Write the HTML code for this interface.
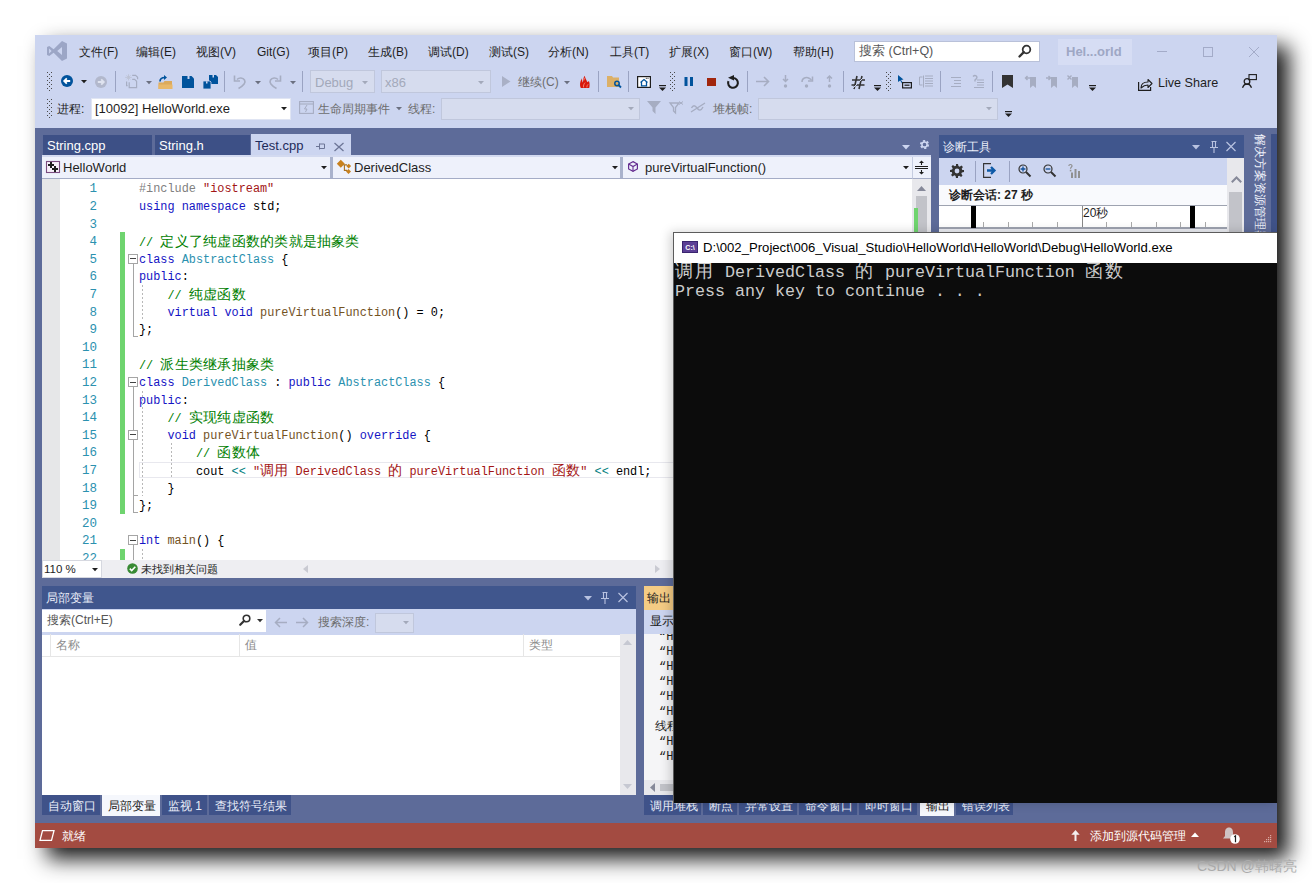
<!DOCTYPE html>
<html><head><meta charset="utf-8">
<style>
*{margin:0;padding:0;box-sizing:border-box}
html,body{width:1312px;height:883px;background:#fff;overflow:hidden;font-family:"Liberation Sans",sans-serif;font-size:12px;color:#1e1e1e}
body{position:relative}
.a{position:absolute;white-space:nowrap}
svg{position:absolute;overflow:visible}
#win{position:absolute;left:35px;top:35px;width:1242px;height:813px;background:#5d6b99;box-shadow:12px 11px 20px 0 rgba(0,0,0,.9)}
.top{position:absolute;left:35px;top:35px;width:1242px;height:93px;background:#ccd5f0}
.mi{position:absolute;top:44px;font-size:12px;color:#1e1e1e;white-space:nowrap;line-height:16px}
.sep{position:absolute;width:1px;background:#9aa3c2}
.combo{position:absolute;border:1px solid #c0c7dc;background:#d6dcee}
.tab{position:absolute;height:20px;background:#3d5086;color:#fff;font-size:13px;line-height:21px;padding-left:4px;white-space:nowrap}
.ln{position:absolute;left:60px;width:37px;text-align:right;font-family:"Liberation Mono",monospace;font-size:12.5px;line-height:17.6px;color:#2b91af}
.code{position:absolute;left:139px;font-family:"Liberation Mono",monospace;font-size:11.87px;line-height:17.6px;color:#000;white-space:pre}
.code i{font-style:normal}
.cj{display:inline-block;font-weight:normal;font-size:13.5px;letter-spacing:0.24px;white-space:nowrap}
.con{left:675px;font-family:"Liberation Mono",monospace;font-size:16.67px;line-height:19px;color:#cccccc;white-space:pre}
.cc{display:inline-block;font-weight:normal;font-size:18px;letter-spacing:2px;white-space:nowrap}
</style></head><body>
<div id="win"></div>
<div class="top"></div>
<!-- MENU BAR -->
<svg style="left:47px;top:41px" width="20" height="20" viewBox="0 0 20 20"><path fill="#9ca6c6" fill-rule="evenodd" d="M20 2.6L15 0 6.6 8.3 2.3 4.9 0 6v8l2.3 1.1 4.3-3.4L15 20l5-2.6zM2.1 7.6L4.6 10 2.1 12.4zM15 6L10.2 10 15 14z"/></svg>
<span class="mi" style="left:79px">文件(F)</span>
<span class="mi" style="left:136px">编辑(E)</span>
<span class="mi" style="left:196px">视图(V)</span>
<span class="mi" style="left:257px">Git(G)</span>
<span class="mi" style="left:308px">项目(P)</span>
<span class="mi" style="left:368px">生成(B)</span>
<span class="mi" style="left:428px">调试(D)</span>
<span class="mi" style="left:489px">测试(S)</span>
<span class="mi" style="left:548px">分析(N)</span>
<span class="mi" style="left:610px">工具(T)</span>
<span class="mi" style="left:669px">扩展(X)</span>
<span class="mi" style="left:729px">窗口(W)</span>
<span class="mi" style="left:793px">帮助(H)</span>
<div class="a" style="left:854px;top:41px;width:186px;height:21px;background:#fff;border:1px solid #b9c1d9"></div>
<span class="a" style="left:859px;top:43px;font-size:12.5px;color:#555;line-height:16px">搜索 (Ctrl+Q)</span>
<svg style="left:1018px;top:44px" width="14" height="14" viewBox="0 0 14 14"><circle cx="8.5" cy="5.5" r="3.8" fill="none" stroke="#333" stroke-width="1.8"/><path d="M5.8 8.2L1.5 12.5" stroke="#333" stroke-width="2.4" stroke-linecap="round"/></svg>
<div class="a" style="left:1058px;top:39px;width:74px;height:26px;background:#d6ddf4"></div>
<span class="a" style="left:1066px;top:44px;font-size:13px;font-weight:bold;color:#9ea7c4;line-height:16px">Hel...orld</span>
<div class="a" style="left:1157px;top:51px;width:10px;height:1px;background:#a3abc8"></div>
<div class="a" style="left:1203px;top:47px;width:10px;height:10px;border:1px solid #a3abc8"></div>
<svg style="left:1249px;top:47px" width="10" height="10" viewBox="0 0 10 10"><path d="M0 0L10 10M10 0L0 10" stroke="#a3abc8" stroke-width="1"/></svg>
<!-- TOOLBAR ROW 1 -->
<svg style="left:47px;top:72px" width="6" height="20" viewBox="0 0 6 20"><rect x="0" y="0" width="1" height="1" fill="#4a4a4a"/><rect x="4" y="0" width="1" height="1" fill="#4a4a4a"/><rect x="2" y="2" width="1" height="1" fill="#4a4a4a"/><rect x="0" y="4" width="1" height="1" fill="#4a4a4a"/><rect x="4" y="4" width="1" height="1" fill="#4a4a4a"/><rect x="2" y="6" width="1" height="1" fill="#4a4a4a"/><rect x="0" y="8" width="1" height="1" fill="#4a4a4a"/><rect x="4" y="8" width="1" height="1" fill="#4a4a4a"/><rect x="2" y="10" width="1" height="1" fill="#4a4a4a"/><rect x="0" y="12" width="1" height="1" fill="#4a4a4a"/><rect x="4" y="12" width="1" height="1" fill="#4a4a4a"/><rect x="2" y="14" width="1" height="1" fill="#4a4a4a"/><rect x="0" y="16" width="1" height="1" fill="#4a4a4a"/><rect x="4" y="16" width="1" height="1" fill="#4a4a4a"/><rect x="2" y="18" width="1" height="1" fill="#4a4a4a"/></svg>
<svg style="left:61px;top:75px" width="12" height="12" viewBox="0 0 12 12"><circle cx="6" cy="6" r="6" fill="#00539c"/><path d="M9.2 6H3.4M5.8 3.4L3.2 6 5.8 8.6" stroke="#fff" stroke-width="1.8" fill="none"/></svg>
<svg style="left:81px;top:80px" width="6" height="4" viewBox="0 0 6 4"><path d="M0 0H6L3 3.2z" fill="#1e1e1e"/></svg>
<svg style="left:95px;top:75.5px" width="12" height="12" viewBox="0 0 12 12"><circle cx="6" cy="6" r="6" fill="#b2b8cc"/><path d="M2.8 6H8.6M6.2 3.4L8.8 6 6.2 8.6" stroke="#dfe3ef" stroke-width="1.8" fill="none"/></svg>
<div class="sep" style="left:115px;top:71px;height:21px"></div>
<svg style="left:122px;top:72px" width="20" height="20" viewBox="0 0 20 20"><path d="M6.5 2.3v6.1M3.2 5.4h6.5M4.5 3.4l4 4M8.5 3.4l-4 4" stroke="#bcc2d4" stroke-width="0.9"/><path d="M10.2 3.4h3.4l2 1.8v2" stroke="#a6adc2" stroke-width="1.2" fill="none"/><path d="M10.2 7.4h2.4l2 1.8v6.4H7.2V10.2" stroke="#a6adc2" stroke-width="1.2" fill="none"/><path d="M4.6 9.4v4.3h1" stroke="#a6adc2" stroke-width="1.2" fill="none"/></svg>
<svg style="left:146px;top:80.5px" width="6" height="4" viewBox="0 0 6 4"><path d="M0 0H6L3 3.2z" fill="#6b7080"/></svg>
<svg style="left:158px;top:75px" width="15" height="14" viewBox="0 0 15 14"><path d="M0.5 7.5h5l1-1.5h7.5v8H0.5z" fill="#dcaa5c"/><path d="M0.5 9.5h14v4.5H0.5z" fill="#e8b86a"/><path d="M2 6.5C2 3.5 4 2.5 7 2.5" stroke="#00539c" stroke-width="1.7" fill="none"/><path d="M6 0L9 2.5 6 5z" fill="#00539c"/></svg>
<svg style="left:182px;top:76px" width="12" height="12" viewBox="0 0 12 12"><path d="M0 0h9.5L12 2.5V12H0z" fill="#00539c"/><rect x="5.5" y="0" width="2" height="3" fill="#ccd5f0"/></svg>
<svg style="left:203px;top:75px" width="15" height="14" viewBox="0 0 15 14"><path d="M6 0h7l2 2v7H6z" fill="#00539c"/><rect x="9.5" y="0" width="1.5" height="2.5" fill="#ccd5f0"/><path d="M0 6h7l1 1v7H0z" fill="#00539c" stroke="#ccd5f0" stroke-width="0.8"/><rect x="3" y="6.3" width="1.5" height="2.2" fill="#ccd5f0"/></svg>
<div class="sep" style="left:224px;top:71px;height:21px"></div>
<svg style="left:234px;top:75px" width="13" height="14" viewBox="0 0 13 14"><path d="M3 4.5C5 2.5 9 2.5 10.5 5 12 7.5 10 10.5 4.5 13.5" stroke="#a6adc2" stroke-width="1.6" fill="none"/><path d="M0.5 0.5v5.5h5.5" stroke="#a6adc2" stroke-width="1.6" fill="none"/></svg>
<svg style="left:255px;top:81px" width="6" height="4" viewBox="0 0 6 4"><path d="M0 0H6L3 3.2z" fill="#6b7080"/></svg>
<svg style="left:268px;top:75px" width="13" height="14" viewBox="0 0 13 14"><path d="M10 4.5C8 2.5 4 2.5 2.5 5 1 7.5 3 10.5 8.5 13.5" stroke="#a6adc2" stroke-width="1.6" fill="none"/><path d="M12.5 0.5v5.5H7" stroke="#a6adc2" stroke-width="1.6" fill="none"/></svg>
<svg style="left:290px;top:81px" width="6" height="4" viewBox="0 0 6 4"><path d="M0 0H6L3 3.2z" fill="#6b7080"/></svg>
<div class="sep" style="left:302px;top:71px;height:21px"></div>
<div class="combo" style="left:310px;top:70px;width:65px;height:23px"></div><span class="a" style="left:315px;top:74.5px;font-size:13px;color:#a3a9ba;line-height:16px">Debug</span>
<svg style="left:362px;top:81px" width="6" height="4" viewBox="0 0 6 4"><path d="M0 0H6L3 3.2z" fill="#a3a9ba"/></svg>
<div class="combo" style="left:381px;top:70px;width:110px;height:23px"></div><span class="a" style="left:385px;top:74.5px;font-size:13px;color:#a3a9ba;line-height:16px">x86</span>
<svg style="left:478px;top:81px" width="6" height="4" viewBox="0 0 6 4"><path d="M0 0H6L3 3.2z" fill="#a3a9ba"/></svg>
<svg style="left:502px;top:76px" width="9" height="11" viewBox="0 0 9 11"><path d="M0 0L8.5 5.5 0 11z" fill="#a9b0c6"/></svg>
<span class="a" style="left:518px;top:74px;font-size:12px;color:#6d6d6d;line-height:16px">继续(C)</span>
<svg style="left:564px;top:81px" width="6" height="4" viewBox="0 0 6 4"><path d="M0 0H6L3 3.2z" fill="#6b7080"/></svg>
<svg style="left:579px;top:75px" width="12" height="14" viewBox="0 0 12 14"><path d="M1.8 13C0.6 10.5 0.6 7 3 3.2 3 5.5 3.4 7 4 7.6 4 4.5 4.6 2 5.6 0.8 6 3 7.6 5 8.2 7.2 8.6 6.6 9.4 6.4 10 6.2 10.8 8 10.8 11 10.2 13z" fill="#d9170b"/><path d="M4.6 12.4C4.2 10.4 5 8.8 6.1 7.6M7.8 12.4C7.8 11 8.4 10 9.1 9.3M4.8 5.5C5 4.2 5.3 3.3 5.6 2.8" stroke="#f7a090" stroke-width="0.8" fill="none"/></svg>
<div class="sep" style="left:598px;top:71px;height:21px"></div>
<svg style="left:607px;top:76px" width="15" height="12" viewBox="0 0 15 12"><path d="M0 0h5l1 1.5h6V11H0z" fill="#dcb067"/><circle cx="10" cy="7.5" r="2.2" fill="none" stroke="#00539c" stroke-width="1.5"/><path d="M11.5 9l2.5 2.5" stroke="#00539c" stroke-width="1.8"/></svg>
<div class="sep" style="left:628px;top:71px;height:21px"></div>
<svg style="left:637px;top:76px" width="14" height="12" viewBox="0 0 14 12"><rect x="0.6" y="0.6" width="12.8" height="10.8" fill="#fff" stroke="#1e1e1e" stroke-width="1.2"/><path d="M3.5 6.5L7 3.5 10.5 6.5M4.5 6v3.8h5V6" stroke="#00539c" stroke-width="1.3" fill="none"/><rect x="10.5" y="1.8" width="1" height="1" fill="#1e1e1e"/><rect x="8.8" y="1.8" width="1" height="1" fill="#1e1e1e"/></svg>
<svg style="left:659px;top:85px" width="7" height="6" viewBox="0 0 7 6"><rect x="0" y="0" width="7" height="1.2" fill="#1e1e1e"/><path d="M0 2.4H7L3.5 6z" fill="#1e1e1e"/></svg>
<svg style="left:670px;top:72px" width="6" height="20" viewBox="0 0 6 20"><rect x="0" y="0" width="1" height="1" fill="#4a4a4a"/><rect x="4" y="0" width="1" height="1" fill="#4a4a4a"/><rect x="2" y="2" width="1" height="1" fill="#4a4a4a"/><rect x="0" y="4" width="1" height="1" fill="#4a4a4a"/><rect x="4" y="4" width="1" height="1" fill="#4a4a4a"/><rect x="2" y="6" width="1" height="1" fill="#4a4a4a"/><rect x="0" y="8" width="1" height="1" fill="#4a4a4a"/><rect x="4" y="8" width="1" height="1" fill="#4a4a4a"/><rect x="2" y="10" width="1" height="1" fill="#4a4a4a"/><rect x="0" y="12" width="1" height="1" fill="#4a4a4a"/><rect x="4" y="12" width="1" height="1" fill="#4a4a4a"/><rect x="2" y="14" width="1" height="1" fill="#4a4a4a"/><rect x="0" y="16" width="1" height="1" fill="#4a4a4a"/><rect x="4" y="16" width="1" height="1" fill="#4a4a4a"/><rect x="2" y="18" width="1" height="1" fill="#4a4a4a"/></svg>
<svg style="left:684px;top:77px" width="10" height="9" viewBox="0 0 10 9"><rect x="0.5" y="0" width="3" height="9" fill="#00539c"/><rect x="6" y="0" width="3" height="9" fill="#00539c"/></svg>
<div class="a" style="left:707px;top:77.5px;width:8.5px;height:8.5px;background:#a1260d"></div>
<svg style="left:723px;top:72px" width="20" height="20" viewBox="0 0 20 20"><path d="M10 6A4.9 4.9 0 1 1 5.4 9.2" stroke="#1e1e1e" stroke-width="2.1" fill="none"/><path d="M5 5.7L11 3.1V8.4z" fill="#1e1e1e"/></svg>
<div class="sep" style="left:747px;top:71px;height:21px"></div>
<svg style="left:756px;top:76px" width="14" height="11" viewBox="0 0 14 11"><path d="M0 5.5h12.5M8 1l4.5 4.5L8 10" stroke="#a6adc2" stroke-width="1.6" fill="none"/></svg>
<svg style="left:782px;top:75px" width="7" height="13" viewBox="0 0 7 13"><path d="M3.5 0v6.5M1 4l2.5 2.5L6 4" stroke="#a6adc2" stroke-width="1.5" fill="none"/><circle cx="3.5" cy="11" r="1.7" fill="#a6adc2"/></svg>
<svg style="left:801px;top:75px" width="12" height="13" viewBox="0 0 12 13"><path d="M1 7C1 3 5 1.5 8.5 3.5L10.5 5" stroke="#a6adc2" stroke-width="1.5" fill="none"/><path d="M11.5 1.5V6H7" stroke="#a6adc2" stroke-width="1.5" fill="none"/><circle cx="5.5" cy="11" r="1.7" fill="#a6adc2"/></svg>
<svg style="left:826px;top:75px" width="7" height="13" viewBox="0 0 7 13"><path d="M3.5 7V1M1 3.5L3.5 1 6 3.5" stroke="#a6adc2" stroke-width="1.5" fill="none"/><circle cx="3.5" cy="11" r="1.7" fill="#a6adc2"/></svg>
<div class="sep" style="left:843px;top:71px;height:21px"></div>
<svg style="left:851px;top:75px" width="15" height="15" viewBox="0 0 15 15"><path d="M6 1L3 14M11 1L8 14M1 5h13M0.5 10h13" stroke="#333" stroke-width="1.6"/><path d="M1 14L14 1" stroke="#ccd5f0" stroke-width="1"/></svg>
<svg style="left:874px;top:85px" width="7" height="6" viewBox="0 0 7 6"><rect x="0" y="0" width="7" height="1.2" fill="#1e1e1e"/><path d="M0 2.4H7L3.5 6z" fill="#1e1e1e"/></svg>
<svg style="left:886px;top:72px" width="6" height="20" viewBox="0 0 6 20"><rect x="0" y="0" width="1" height="1" fill="#4a4a4a"/><rect x="4" y="0" width="1" height="1" fill="#4a4a4a"/><rect x="2" y="2" width="1" height="1" fill="#4a4a4a"/><rect x="0" y="4" width="1" height="1" fill="#4a4a4a"/><rect x="4" y="4" width="1" height="1" fill="#4a4a4a"/><rect x="2" y="6" width="1" height="1" fill="#4a4a4a"/><rect x="0" y="8" width="1" height="1" fill="#4a4a4a"/><rect x="4" y="8" width="1" height="1" fill="#4a4a4a"/><rect x="2" y="10" width="1" height="1" fill="#4a4a4a"/><rect x="0" y="12" width="1" height="1" fill="#4a4a4a"/><rect x="4" y="12" width="1" height="1" fill="#4a4a4a"/><rect x="2" y="14" width="1" height="1" fill="#4a4a4a"/><rect x="0" y="16" width="1" height="1" fill="#4a4a4a"/><rect x="4" y="16" width="1" height="1" fill="#4a4a4a"/><rect x="2" y="18" width="1" height="1" fill="#4a4a4a"/></svg>
<svg style="left:898px;top:75px" width="14" height="14" viewBox="0 0 14 14"><path d="M0 0L5.5 4.5 3 5 5 8 4 8.5 2.2 5.5 0 7z" fill="#00539c"/><rect x="4.6" y="7.6" width="8.8" height="5.3" fill="none" stroke="#1e1e1e" stroke-width="1.2"/><path d="M6.5 10.2h5" stroke="#1e1e1e" stroke-width="1.2"/></svg>
<svg style="left:919px;top:75px" width="14" height="13" viewBox="0 0 14 13"><path d="M0.5 2v8M0.5 2h3M0.5 10h3M4.5 0.5v12M6 1h8M6 3.5h8M6 6h8M6 8.5h8M6 11h8" stroke="#a6adc2" stroke-width="1"/></svg>
<div class="sep" style="left:940px;top:71px;height:21px"></div>
<svg style="left:951px;top:77px" width="10" height="10" viewBox="0 0 10 10"><path d="M0 0.5h10M3 3.5h7M3 6.5h7M0 9.5h10" stroke="#a6adc2" stroke-width="1"/></svg>
<svg style="left:972px;top:75px" width="12" height="13" viewBox="0 0 12 13"><path d="M1 1.5C3 -0.5 6 1 4.5 3.5L3 5v1.5" stroke="#a6adc2" stroke-width="1.4" fill="none"/><path d="M5 5h7M5 7.5h7M5 10h7M2 12.5h10" stroke="#a6adc2" stroke-width="1"/></svg>
<div class="sep" style="left:992px;top:71px;height:21px"></div>
<svg style="left:1002px;top:75px" width="11" height="13" viewBox="0 0 11 13"><path d="M0 0h11v13L5.5 9.5 0 13z" fill="#333"/></svg>
<svg style="left:1025px;top:75px" width="12" height="13" viewBox="0 0 12 13"><path d="M5 2h6v11L8 10.5 5 13z" fill="#a6adc2"/><path d="M0.5 3h4.5M2.5 1L0.5 3 2.5 5" stroke="#a6adc2" stroke-width="1.4" fill="none"/></svg>
<svg style="left:1046px;top:75px" width="12" height="13" viewBox="0 0 12 13"><path d="M5 2h6v11L8 10.5 5 13z" fill="#a6adc2"/><path d="M0 3h4.5M2.5 1l2 2-2 2" stroke="#a6adc2" stroke-width="1.4" fill="none"/></svg>
<svg style="left:1067px;top:75px" width="12" height="13" viewBox="0 0 12 13"><path d="M5 2h6v11L8 10.5 5 13z" fill="#a6adc2"/><path d="M0.5 0.5l4 4M4.5 0.5l-4 4" stroke="#a6adc2" stroke-width="1.4"/></svg>
<svg style="left:1089px;top:85px" width="7" height="6" viewBox="0 0 7 6"><rect x="0" y="0" width="7" height="1.2" fill="#1e1e1e"/><path d="M0 2.4H7L3.5 6z" fill="#1e1e1e"/></svg>
<svg style="left:1138px;top:77px" width="15" height="14" viewBox="0 0 15 14"><path d="M0.6 5v8.4h12V10" stroke="#1e1e1e" stroke-width="1.2" fill="none"/><path d="M3 11C3 7 6 5 10 5V2.5L14 6.5 10 10.5V8C7 8 5 9 3 11z" stroke="#1e1e1e" stroke-width="1.1" fill="none" stroke-linejoin="round"/></svg>
<span class="a" style="left:1158px;top:75px;font-size:12.6px;color:#1e1e1e;line-height:16px">Live Share</span>
<svg style="left:1242px;top:74px" width="15" height="14" viewBox="0 0 15 14"><rect x="7" y="0.6" width="7.4" height="5" fill="none" stroke="#1e1e1e" stroke-width="1.1"/><circle cx="5" cy="7.5" r="2.8" fill="none" stroke="#1e1e1e" stroke-width="1.3"/><path d="M0.5 13.8C1.5 11 3 10 5 10S8.5 11 9.5 13.8" stroke="#1e1e1e" stroke-width="1.3" fill="none"/></svg>
<!-- TOOLBAR ROW 2 -->
<svg style="left:47px;top:99px" width="6" height="20" viewBox="0 0 6 20"><rect x="0" y="0" width="1" height="1" fill="#4a4a4a"/><rect x="4" y="0" width="1" height="1" fill="#4a4a4a"/><rect x="2" y="2" width="1" height="1" fill="#4a4a4a"/><rect x="0" y="4" width="1" height="1" fill="#4a4a4a"/><rect x="4" y="4" width="1" height="1" fill="#4a4a4a"/><rect x="2" y="6" width="1" height="1" fill="#4a4a4a"/><rect x="0" y="8" width="1" height="1" fill="#4a4a4a"/><rect x="4" y="8" width="1" height="1" fill="#4a4a4a"/><rect x="2" y="10" width="1" height="1" fill="#4a4a4a"/><rect x="0" y="12" width="1" height="1" fill="#4a4a4a"/><rect x="4" y="12" width="1" height="1" fill="#4a4a4a"/><rect x="2" y="14" width="1" height="1" fill="#4a4a4a"/><rect x="0" y="16" width="1" height="1" fill="#4a4a4a"/><rect x="4" y="16" width="1" height="1" fill="#4a4a4a"/><rect x="2" y="18" width="1" height="1" fill="#4a4a4a"/></svg>
<span class="mi" style="left:57px;top:101px">进程:</span>
<div class="a" style="left:91px;top:98px;width:200px;height:22px;background:#fff;border:1px solid #e0e5f3"></div>
<span class="a" style="left:95px;top:101px;font-size:13px;color:#1e1e1e;line-height:16px">[10092] HelloWorld.exe</span>
<svg style="left:281px;top:107px" width="6" height="4" viewBox="0 0 6 4"><path d="M0 0H6L3 3.2z" fill="#1e1e1e"/></svg>
<svg style="left:299px;top:101px" width="15" height="13" viewBox="0 0 15 13"><rect x="0.6" y="0.6" width="13.8" height="11.8" fill="none" stroke="#a6adc2" stroke-width="1.1"/><path d="M0.6 3h13.8" stroke="#a6adc2" stroke-width="1.1"/><path d="M8 4L5.5 8H8L6.5 11" stroke="#a6adc2" stroke-width="1" fill="none"/></svg>
<span class="a" style="left:318px;top:101px;font-size:12px;color:#6d6d6d;line-height:16px">生命周期事件</span>
<svg style="left:396px;top:107px" width="6" height="4" viewBox="0 0 6 4"><path d="M0 0H6L3 3.2z" fill="#6b7080"/></svg>
<span class="a" style="left:408px;top:101px;font-size:12px;color:#6d6d6d;line-height:16px">线程:</span>
<div class="combo" style="left:441px;top:98px;width:199px;height:22px"></div>
<svg style="left:628px;top:107px" width="6" height="4" viewBox="0 0 6 4"><path d="M0 0H6L3 3.2z" fill="#a3a9ba"/></svg>
<svg style="left:647px;top:101px" width="14" height="13" viewBox="0 0 14 13"><path d="M0 0h14L8.5 6.5V13L5.5 10V6.5z" fill="#a6adc2"/></svg>
<svg style="left:670px;top:101px" width="14" height="13" viewBox="0 0 14 13"><path d="M0 2h9L5.5 6.5V12L3.5 10V6.5z" fill="none" stroke="#a6adc2" stroke-width="1.3"/><path d="M9 0.5l4 3M13 0.5l-4 3" stroke="#a6adc2" stroke-width="1"/></svg>
<svg style="left:691px;top:102px" width="15" height="11" viewBox="0 0 15 11"><path d="M0.5 6C2 3 4 3 6 6S10 9 12 5M0 10L14 1" stroke="#a6adc2" stroke-width="1.4" fill="none"/></svg>
<span class="a" style="left:713px;top:101px;font-size:12px;color:#6d6d6d;line-height:16px">堆栈帧:</span>
<div class="combo" style="left:758px;top:98px;width:240px;height:22px"></div>
<svg style="left:986px;top:107px" width="6" height="4" viewBox="0 0 6 4"><path d="M0 0H6L3 3.2z" fill="#a3a9ba"/></svg>
<svg style="left:1005px;top:111px" width="7" height="6" viewBox="0 0 7 6"><rect x="0" y="0" width="7" height="1.2" fill="#1e1e1e"/><path d="M0 2.4H7L3.5 6z" fill="#1e1e1e"/></svg>
<!-- DOC TABS -->
<div class="tab" style="left:43px;top:135px;width:109px">String.cpp</div>
<div class="tab" style="left:155px;top:135px;width:95px">String.h</div>
<div class="a" style="left:251px;top:134px;width:100px;height:23px;background:#ccd5f0"></div>
<span class="a" style="left:255px;top:138px;font-size:13px;color:#1e2b5a;line-height:16px">Test.cpp</span>
<svg style="left:316px;top:143px" width="9" height="7" viewBox="0 0 9 7"><path d="M0 3.5h3M3.5 0.5v6M3.5 1h5v4.5h-5" stroke="#6c7596" stroke-width="1" fill="none"/></svg>
<svg style="left:334px;top:143px" width="10" height="8" viewBox="0 0 10 8"><path d="M0.5 0L9.5 8M9.5 0L0.5 8" stroke="#6c7596" stroke-width="1.3"/></svg>
<svg style="left:902px;top:145px" width="8" height="5" viewBox="0 0 8 5"><path d="M0 0h8L4 4.5z" fill="#ccd5f0"/></svg>
<svg style="left:919px;top:139px" width="11" height="11" viewBox="0 0 11 11"><circle cx="5.5" cy="5.5" r="3.4" fill="none" stroke="#ccd5f0" stroke-width="2.4" stroke-dasharray="2 1.55"/><circle cx="5.5" cy="5.5" r="2.6" fill="none" stroke="#ccd5f0" stroke-width="1.5"/></svg>
<!-- NAV BAR -->
<div class="a" style="left:42px;top:155px;width:889px;height:3px;background:#d3daf0"></div>
<div class="a" style="left:42px;top:157px;width:870px;height:22px;background:#eef1fb;border-bottom:1px solid #a4acc6"></div>
<div class="a" style="left:912px;top:157px;width:19px;height:22px;background:#eef1fb;border-bottom:1px solid #a4acc6;border-left:1px solid #c5cce0"></div>
<div class="a" style="left:330px;top:157px;width:3px;height:21px;background:#a9b2cc"></div>
<div class="a" style="left:620px;top:157px;width:3px;height:21px;background:#a9b2cc"></div>
<svg style="left:46px;top:161px" width="14" height="12" viewBox="0 0 14 12"><rect x="0.5" y="0.5" width="13" height="11" fill="#f7f0fa" stroke="#7a4d80" stroke-width="1.1"/><path d="M2 4h6M5 1v6M6 8h6M9 5v6" stroke="#1e1e1e" stroke-width="2"/></svg>
<span class="a" style="left:63px;top:160px;font-size:13px;color:#1e1e1e;line-height:16px">HelloWorld</span>
<svg style="left:321px;top:166px" width="6" height="4" viewBox="0 0 6 4"><path d="M0 0H6L3 3.2z" fill="#1e1e1e"/></svg>
<svg style="left:336px;top:158px" width="16" height="16" viewBox="0 0 16 16"><path d="M0.8 5.8L4.8 1.8 8.8 5.8 4.8 9.8zM10.3 8.1L12.7 5.7 15.1 8.1 12.7 10.5zM10 13.5L12.5 11 15 13.5 12.5 16z" fill="#c8811e"/><path d="M7.5 6.9H11M8.4 6.9V12.4H11" stroke="#a87020" stroke-width="1.1" fill="none"/></svg>
<span class="a" style="left:354px;top:160px;font-size:13px;color:#1e1e1e;line-height:16px">DerivedClass</span>
<svg style="left:612px;top:166px" width="6" height="4" viewBox="0 0 6 4"><path d="M0 0H6L3 3.2z" fill="#1e1e1e"/></svg>
<svg style="left:627.5px;top:161.3px" width="10" height="11" viewBox="0 0 10 11"><path d="M5 0.6L9.4 3v5L5 10.4 0.6 8V3z" fill="none" stroke="#652d90" stroke-width="1.2"/><path d="M0.6 3L5 5.5 9.4 3M5 5.5v4.9" stroke="#652d90" stroke-width="1.1" fill="none"/></svg>
<span class="a" style="left:645px;top:160px;font-size:13px;color:#1e1e1e;line-height:16px">pureVirtualFunction()</span>
<svg style="left:903px;top:166px" width="6" height="4" viewBox="0 0 6 4"><path d="M0 0H6L3 3.2z" fill="#1e1e1e"/></svg>
<svg style="left:915px;top:160px" width="13" height="15" viewBox="0 0 13 15"><path d="M0 6.5h13M0 8.5h13M6.5 1v4M6.5 10v4" stroke="#1e1e1e" stroke-width="1.1"/><path d="M4 3L6.5 0.5 9 3zM4 12L6.5 14.5 9 12z" fill="#1e1e1e"/></svg>
<!-- EDITOR -->
<div class="a" style="left:0;top:0;width:1312px;height:560px;overflow:hidden">
<div class="a" style="left:42px;top:179px;width:870px;height:381px;background:#fff;overflow:hidden"></div>
<div class="a" style="left:42px;top:179px;width:18px;height:381px;background:#e6e7e8"></div>
<div class="a" style="left:912px;top:179px;width:19px;height:381px;background:#e8e8ec"></div>
<svg style="left:917px;top:186px" width="9" height="5" viewBox="0 0 9 5"><path d="M0 5L4.5 0 9 5z" fill="#868999"/></svg>
<div class="a" style="left:916px;top:196px;width:11px;height:364px;background:#c2c3c9"></div>
<div class="a" style="left:913.5px;top:208px;width:4.5px;height:352px;background:#6fd46f"></div>
<div class="a" style="left:138.5px;top:461.5px;width:780px;height:16px;border:1.5px solid #e8e8ee;border-right:none"></div>
<span class="ln" style="top:181.4px">1</span>
<span class="code" style="top:181.4px"><i style="color:#808080">#include </i><i style="color:#a31515">&quot;iostream&quot;</i></span>
<span class="ln" style="top:199.0px">2</span>
<span class="code" style="top:199.0px"><i style="color:#1414c4">using</i> <i style="color:#1414c4">namespace</i> std;</span>
<span class="ln" style="top:216.6px">3</span>
<span class="ln" style="top:234.2px">4</span>
<span class="code" style="top:234.2px"><i style="color:#008000">// <b class="cj" style="width:199.36px">定义了纯虚函数的类就是抽象类</b></i></span>
<span class="ln" style="top:251.8px">5</span>
<span class="code" style="top:251.8px"><i style="color:#1414c4">class</i> <i style="color:#2b91af">AbstractClass</i> {</span>
<span class="ln" style="top:269.4px">6</span>
<span class="code" style="top:269.4px"><i style="color:#1414c4">public</i>:</span>
<span class="ln" style="top:287.0px">7</span>
<span class="code" style="top:287.0px">    <i style="color:#008000">// <b class="cj" style="width:56.96px">纯虚函数</b></i></span>
<span class="ln" style="top:304.6px">8</span>
<span class="code" style="top:304.6px">    <i style="color:#1414c4">virtual</i> <i style="color:#1414c4">void</i> <i style="color:#74531f">pureVirtualFunction</i>() = 0;</span>
<span class="ln" style="top:322.2px">9</span>
<span class="code" style="top:322.2px">};</span>
<span class="ln" style="top:339.8px">10</span>
<span class="ln" style="top:357.4px">11</span>
<span class="code" style="top:357.4px"><i style="color:#008000">// <b class="cj" style="width:113.92px">派生类继承抽象类</b></i></span>
<span class="ln" style="top:375.0px">12</span>
<span class="code" style="top:375.0px"><i style="color:#1414c4">class</i> <i style="color:#2b91af">DerivedClass</i> : <i style="color:#1414c4">public</i> <i style="color:#2b91af">AbstractClass</i> {</span>
<span class="ln" style="top:392.6px">13</span>
<span class="code" style="top:392.6px"><i style="color:#1414c4">public</i>:</span>
<span class="ln" style="top:410.2px">14</span>
<span class="code" style="top:410.2px">    <i style="color:#008000">// <b class="cj" style="width:85.44px">实现纯虚函数</b></i></span>
<span class="ln" style="top:427.8px">15</span>
<span class="code" style="top:427.8px">    <i style="color:#1414c4">void</i> <i style="color:#74531f">pureVirtualFunction</i>() <i style="color:#1414c4">override</i> {</span>
<span class="ln" style="top:445.4px">16</span>
<span class="code" style="top:445.4px">        <i style="color:#008000">// <b class="cj" style="width:42.72px">函数体</b></i></span>
<span class="ln" style="top:463.0px">17</span>
<span class="code" style="top:463.0px">        cout <i style="color:#008080">&lt;&lt;</i> <i style="color:#a31515">&quot;<b class="cj" style="width:28.48px">调用</b> DerivedClass <b class="cj" style="width:14.24px">的</b> pureVirtualFunction <b class="cj" style="width:28.48px">函数</b>&quot;</i> <i style="color:#008080">&lt;&lt;</i> endl;</span>
<span class="ln" style="top:480.6px">18</span>
<span class="code" style="top:480.6px">    }</span>
<span class="ln" style="top:498.2px">19</span>
<span class="code" style="top:498.2px">};</span>
<span class="ln" style="top:515.8px">20</span>
<span class="ln" style="top:533.4px">21</span>
<span class="code" style="top:533.4px"><i style="color:#1414c4">int</i> <i style="color:#74531f">main</i>() {</span>
<span class="ln" style="top:551.0px">22</span>
<div class="a" style="left:120px;top:232.2px;width:5px;height:281.6px;background:#6fd46f"></div>
<div class="a" style="left:120px;top:549.0px;width:5px;height:11.0px;background:#6fd46f"></div>
<div class="a" style="left:128px;top:253.8px;width:10px;height:10px;border:1px solid #a5a5a5;background:#fff"></div><div class="a" style="left:130px;top:258.3px;width:6px;height:1px;background:#444"></div>
<div class="a" style="left:133px;top:263.8px;width:1px;height:72.5px;background:#a5a5a5"></div>
<div class="a" style="left:133px;top:336.3px;width:5px;height:1px;background:#a5a5a5"></div>
<div class="a" style="left:128px;top:377.0px;width:10px;height:10px;border:1px solid #a5a5a5;background:#fff"></div><div class="a" style="left:130px;top:381.5px;width:6px;height:1px;background:#444"></div>
<div class="a" style="left:133px;top:387.0px;width:1px;height:125.3px;background:#a5a5a5"></div>
<div class="a" style="left:133px;top:512.3px;width:5px;height:1px;background:#a5a5a5"></div>
<div class="a" style="left:128px;top:429.8px;width:10px;height:10px;border:1px solid #a5a5a5;background:#fff"></div><div class="a" style="left:130px;top:434.3px;width:6px;height:1px;background:#444"></div>
<div class="a" style="left:133px;top:439.8px;width:1px;height:54.9px;background:#a5a5a5"></div>
<div class="a" style="left:133px;top:494.7px;width:5px;height:1px;background:#a5a5a5"></div>
<div class="a" style="left:128px;top:535.4px;width:10px;height:10px;border:1px solid #a5a5a5;background:#fff"></div><div class="a" style="left:130px;top:539.9px;width:6px;height:1px;background:#444"></div>
<div class="a" style="left:133px;top:545.4px;width:1px;height:37.3px;background:#a5a5a5"></div>
<div class="a" style="left:142px;top:285.0px;width:1px;height:35.2px;background-image:linear-gradient(#b8b8b8 50%,transparent 50%);background-size:1px 4px"></div>
<div class="a" style="left:142px;top:390.6px;width:1px;height:105.6px;background-image:linear-gradient(#b8b8b8 50%,transparent 50%);background-size:1px 4px"></div>
<div class="a" style="left:171px;top:443.4px;width:1px;height:35.2px;background-image:linear-gradient(#b8b8b8 50%,transparent 50%);background-size:1px 4px"></div>
<div class="a" style="left:142px;top:549.0px;width:1px;height:11.0px;background-image:linear-gradient(#b8b8b8 50%,transparent 50%);background-size:1px 4px"></div>
</div>
<div class="a" style="left:42px;top:560px;width:889px;height:18px;background:#eeeef2"></div>
<div class="a" style="left:42px;top:560px;width:60px;height:18px;background:#fff;border:1px solid #d6d8e0"></div>
<span class="a" style="left:44px;top:562px;font-size:11.5px;color:#1e1e1e;line-height:14px">110 %</span>
<svg style="left:92px;top:568px" width="6" height="4" viewBox="0 0 6 4"><path d="M0 0H6L3 3.2z" fill="#1e1e1e"/></svg>
<svg style="left:127px;top:563px" width="11" height="11" viewBox="0 0 11 11"><circle cx="5.5" cy="5.5" r="5.3" fill="#388a34"/><path d="M2.8 5.6l1.9 1.9 3.6-3.7" stroke="#fff" stroke-width="1.6" fill="none"/></svg>
<span class="a" style="left:141px;top:562px;font-size:11px;color:#1e1e1e;line-height:14px">未找到相关问题</span>
<svg style="left:303px;top:565px" width="5" height="8" viewBox="0 0 5 8"><path d="M5 0L0 4 5 8z" fill="#c9cad2"/></svg>
<svg style="left:655px;top:565px" width="5" height="8" viewBox="0 0 5 8"><path d="M0 0L5 4 0 8z" fill="#c9cad2"/></svg>
<!-- DIAG PANEL -->
<div class="a" style="left:939px;top:135px;width:305px;height:23px;background:#40568d"></div>
<span class="a" style="left:943px;top:139px;font-size:12px;color:#e9edf8;line-height:16px">诊断工具</span>
<svg style="left:1192px;top:145px" width="8" height="5" viewBox="0 0 8 5"><path d="M0 0h8L4 4.5z" fill="#b8c2e0"/></svg>
<svg style="left:1209.5px;top:141px" width="8" height="12" viewBox="0 0 8 12"><path d="M1.5 0.5h5M2.5 0.5v6h3v-6M0 6.5h8M4 6.5V12" stroke="#b8c2e0" stroke-width="1.1" fill="none"/></svg>
<svg style="left:1226px;top:142px" width="10" height="9" viewBox="0 0 10 9"><path d="M0.5 0L9.5 9M9.5 0L0.5 9" stroke="#b8c2e0" stroke-width="1.2"/></svg>
<div class="a" style="left:939px;top:158px;width:288px;height:27px;background:#ccd5f0"></div>
<svg style="left:950px;top:164px" width="14" height="14" viewBox="0 0 14 14"><path fill="#333" fill-rule="evenodd" d="M6 0h2l.4 2.1 1.3.6 1.8-1.2 1.4 1.4-1.2 1.8.6 1.3L14 6v2l-2.1.4-.6 1.3 1.2 1.8-1.4 1.4-1.8-1.2-1.3.6L8 14H6l-.4-2.1-1.3-.6-1.8 1.2-1.4-1.4 1.2-1.8-.6-1.3L0 8V6l2.1-.4.6-1.3-1.2-1.8 1.4-1.4 1.8 1.2 1.3-.6zM7 4.6A2.4 2.4 0 1 0 7 9.4 2.4 2.4 0 1 0 7 4.6z"/></svg>
<div class="sep" style="left:975px;top:161px;height:21px"></div>
<svg style="left:983px;top:163px" width="15" height="15" viewBox="0 0 15 15"><path d="M8 0.6H0.6v13.8H8" stroke="#333" stroke-width="1.1" fill="none"/><path d="M4 7.5h7M8 4l3.5 3.5L8 11" stroke="#0e5aa7" stroke-width="2.3" fill="none"/></svg>
<div class="sep" style="left:1009px;top:161px;height:21px"></div>
<svg style="left:1018px;top:164px" width="13" height="13" viewBox="0 0 13 13"><circle cx="5" cy="5" r="4" fill="none" stroke="#333" stroke-width="1.2"/><path d="M2.6 5h4.8M5 2.6v4.8" stroke="#0e4f9a" stroke-width="1.3"/><path d="M8 8l4.5 4.5" stroke="#333" stroke-width="2"/></svg>
<svg style="left:1043px;top:164px" width="13" height="13" viewBox="0 0 13 13"><circle cx="5" cy="5" r="4" fill="none" stroke="#333" stroke-width="1.2"/><path d="M2.6 5h4.8" stroke="#0e4f9a" stroke-width="1.3"/><path d="M8 8l4.5 4.5" stroke="#333" stroke-width="2"/></svg>
<svg style="left:1068px;top:164px" width="14" height="14" viewBox="0 0 14 14"><path d="M0.8 2C1 0 4 0 4 2 4 3 2.5 3.3 2.5 4.8" stroke="#8f8f8f" stroke-width="1.2" fill="none"/><rect x="1.8" y="5.8" width="1.6" height="1.6" fill="#8f8f8f"/><rect x="3" y="8.5" width="2" height="5.5" fill="#8f8f8f"/><rect x="6.5" y="5" width="2" height="9" fill="#8f8f8f"/><rect x="10" y="7" width="2" height="7" fill="#8f8f8f"/></svg>
<div class="a" style="left:939px;top:185px;width:289px;height:20px;background:#f9fafd"></div>
<span class="a" style="left:949px;top:187px;font-size:12px;font-weight:bold;color:#1e1e1e;line-height:16px">诊断会话: 27 秒</span>
<div class="a" style="left:939px;top:205px;width:289px;height:24px;background:#fff;border-top:1px solid #9ea3b0;border-bottom:2px solid #9ea3b0"></div>
<div class="a" style="left:939px;top:229px;width:289px;height:4px;background:#eceef4"></div>
<div class="a" style="left:982.8px;top:222px;width:1px;height:5px;background:#aaa"></div>
<div class="a" style="left:1007.5px;top:222px;width:1px;height:5px;background:#aaa"></div>
<div class="a" style="left:1032.2px;top:222px;width:1px;height:5px;background:#aaa"></div>
<div class="a" style="left:1056.9px;top:222px;width:1px;height:5px;background:#aaa"></div>
<div class="a" style="left:1081.6px;top:206px;width:1px;height:21px;background:#888"></div>
<div class="a" style="left:1106.3px;top:222px;width:1px;height:5px;background:#aaa"></div>
<div class="a" style="left:1131.0px;top:222px;width:1px;height:5px;background:#aaa"></div>
<div class="a" style="left:1155.7px;top:222px;width:1px;height:5px;background:#aaa"></div>
<div class="a" style="left:1180.4px;top:222px;width:1px;height:5px;background:#aaa"></div>
<div class="a" style="left:1205.1px;top:222px;width:1px;height:5px;background:#aaa"></div>
<span class="a" style="left:1083px;top:205px;font-size:12px;color:#1e1e1e;line-height:16px">20秒</span>
<div class="a" style="left:971px;top:206px;width:5px;height:22px;background:#000"></div>
<div class="a" style="left:1190px;top:206px;width:5px;height:22px;background:#000"></div>
<div class="a" style="left:1226.5px;top:158px;width:17.5px;height:75px;background:#e8e8ec"></div>
<svg style="left:1231px;top:176px" width="11" height="7" viewBox="0 0 11 7"><path d="M0.8 6.2L5.5 1.5 10.2 6.2" stroke="#868999" stroke-width="2" fill="none"/></svg>
<div class="a" style="left:1229px;top:192px;width:13px;height:41px;background:#c2c3c9"></div>
<div class="a" style="left:1271px;top:134px;width:6px;height:99px;background:#3f5288"></div>
<div class="a" style="left:1266px;top:134px;width:0;height:0"><span class="a" style="left:0;top:0;transform-origin:0 0;transform:rotate(90deg);font-size:12px;line-height:12px;color:#eef1fa">解决方案资源管理器</span></div>
<!-- LOCALS PANEL -->
<div class="a" style="left:42px;top:586px;width:594px;height:23px;background:#40568d"></div>
<span class="a" style="left:46px;top:590px;font-size:12px;color:#e9edf8;line-height:16px">局部变量</span>
<svg style="left:584px;top:596px" width="8" height="5" viewBox="0 0 8 5"><path d="M0 0h8L4 4.5z" fill="#b8c2e0"/></svg>
<svg style="left:601px;top:592px" width="8" height="12" viewBox="0 0 8 12"><path d="M1.5 0.5h5M2.5 0.5v6h3v-6M0 6.5h8M4 6.5V12" stroke="#b8c2e0" stroke-width="1.1" fill="none"/></svg>
<svg style="left:618px;top:593px" width="10" height="9" viewBox="0 0 10 9"><path d="M0.5 0L9.5 9M9.5 0L0.5 9" stroke="#b8c2e0" stroke-width="1.2"/></svg>
<div class="a" style="left:42px;top:609px;width:594px;height:26px;background:#ccd5f0"></div>
<div class="a" style="left:42px;top:609.5px;width:224px;height:22px;background:#fff"></div>
<span class="a" style="left:47px;top:612px;font-size:12px;color:#555;line-height:16px">搜索(Ctrl+E)</span>
<svg style="left:239px;top:614px" width="12" height="12" viewBox="0 0 12 12"><circle cx="7.5" cy="4.5" r="3.3" fill="none" stroke="#333" stroke-width="1.6"/><path d="M5 7L1.2 10.8" stroke="#333" stroke-width="2.2" stroke-linecap="round"/></svg>
<svg style="left:257px;top:619px" width="6" height="4" viewBox="0 0 6 4"><path d="M0 0H6L3 3.2z" fill="#333"/></svg>
<svg style="left:274px;top:616.5px" width="13" height="11" viewBox="0 0 13 11"><path d="M13 5.5H1.5M6 1L1.5 5.5 6 10" stroke="#a6adc2" stroke-width="1.5" fill="none"/></svg>
<svg style="left:296px;top:616.5px" width="13" height="11" viewBox="0 0 13 11"><path d="M0 5.5h11.5M7 1l4.5 4.5L7 10" stroke="#a6adc2" stroke-width="1.5" fill="none"/></svg>
<span class="a" style="left:318px;top:613.5px;font-size:12px;color:#6d6d6d;line-height:16px">搜索深度:</span>
<div class="combo" style="left:375px;top:612.5px;width:39px;height:20px"></div>
<svg style="left:403px;top:621px" width="6" height="4" viewBox="0 0 6 4"><path d="M0 0H6L3 3.2z" fill="#a3a9ba"/></svg>
<div class="a" style="left:42px;top:635px;width:578px;height:160px;background:#fff"></div>
<div class="a" style="left:42px;top:656px;width:578px;height:1px;background:#e6e6e6"></div>
<div class="a" style="left:50px;top:634px;width:1px;height:22px;background:#e6e6e6"></div>
<div class="a" style="left:239px;top:634px;width:1px;height:22px;background:#e6e6e6"></div>
<div class="a" style="left:523px;top:634px;width:1px;height:22px;background:#e6e6e6"></div>
<span class="a" style="left:56px;top:637px;font-size:12px;color:#8c8c8c;line-height:16px">名称</span>
<span class="a" style="left:245px;top:637px;font-size:12px;color:#8c8c8c;line-height:16px">值</span>
<span class="a" style="left:529px;top:637px;font-size:12px;color:#8c8c8c;line-height:16px">类型</span>
<div class="a" style="left:620px;top:634px;width:16px;height:161px;background:#e8e8ec"></div>
<svg style="left:623px;top:640px" width="9" height="5" viewBox="0 0 9 5"><path d="M0 5L4.5 0 9 5z" fill="#c6c8d2"/></svg>
<svg style="left:623px;top:784px" width="9" height="5" viewBox="0 0 9 5"><path d="M0 0L4.5 5 9 0z" fill="#c6c8d2"/></svg>
<div class="a" style="left:42px;top:795px;width:58px;height:20px;background:#3f5289;color:#e9edf8;font-size:12px;line-height:22px;padding-left:6px">自动窗口</div>
<div class="a" style="left:102px;top:795px;width:58px;height:21px;background:#f5f7fc;color:#1e1e1e;font-size:12px;line-height:22px;padding-left:6px">局部变量</div>
<div class="a" style="left:162px;top:795px;width:45px;height:20px;background:#3f5289;color:#e9edf8;font-size:12px;line-height:22px;padding-left:6px">监视 1</div>
<div class="a" style="left:209px;top:795px;width:82px;height:20px;background:#3f5289;color:#e9edf8;font-size:12px;line-height:22px;padding-left:6px">查找符号结果</div>
<!-- OUTPUT PANEL -->
<div class="a" style="left:644px;top:586px;width:400px;height:24px;background:#f5cc84"></div>
<span class="a" style="left:647px;top:590px;font-size:12px;color:#1e1e1e;line-height:16px">输出</span>
<div class="a" style="left:644px;top:610px;width:400px;height:24px;background:#ccd5f0"></div>
<span class="a" style="left:650px;top:613px;font-size:12px;color:#1e1e1e;line-height:16px">显示</span>
<div class="a" style="left:644px;top:634px;width:400px;height:161px;background:#f5f5f7"></div>
<div class="a" style="left:644px;top:634px;width:400px;height:146px;overflow:hidden"><span class="a" style="left:15px;top:-5px;font-size:12px;color:#1e1e1e;line-height:16px;font-family:'Liberation Mono'">“H</span><span class="a" style="left:15px;top:10px;font-size:12px;color:#1e1e1e;line-height:16px;font-family:'Liberation Mono'">“H</span><span class="a" style="left:15px;top:25px;font-size:12px;color:#1e1e1e;line-height:16px;font-family:'Liberation Mono'">“H</span><span class="a" style="left:15px;top:40px;font-size:12px;color:#1e1e1e;line-height:16px;font-family:'Liberation Mono'">“H</span><span class="a" style="left:15px;top:55px;font-size:12px;color:#1e1e1e;line-height:16px;font-family:'Liberation Mono'">“H</span><span class="a" style="left:15px;top:70px;font-size:12px;color:#1e1e1e;line-height:16px;font-family:'Liberation Mono'">“H</span><span class="a" style="left:11px;top:85px;font-size:12px;color:#1e1e1e;line-height:16px;font-family:'Liberation Mono'">线程</span><span class="a" style="left:15px;top:100px;font-size:12px;color:#1e1e1e;line-height:16px;font-family:'Liberation Mono'">“H</span><span class="a" style="left:15px;top:115px;font-size:12px;color:#1e1e1e;line-height:16px;font-family:'Liberation Mono'">“H</span></div>
<div class="a" style="left:644px;top:780px;width:400px;height:15px;background:#e8e8ec"></div>
<svg style="left:650px;top:783px" width="5" height="9" viewBox="0 0 5 9"><path d="M5 0L0 4.5 5 9z" fill="#868999"/></svg>
<div class="a" style="left:660px;top:784px;width:30px;height:7px;background:#c2c3c9"></div>
<div class="a" style="left:644px;top:795px;width:57px;height:20px;background:#3f5289;color:#e9edf8;font-size:12px;line-height:22px;padding-left:6px">调用堆栈</div>
<div class="a" style="left:703px;top:795px;width:34px;height:20px;background:#3f5289;color:#e9edf8;font-size:12px;line-height:22px;padding-left:6px">断点</div>
<div class="a" style="left:739px;top:795px;width:58px;height:20px;background:#3f5289;color:#e9edf8;font-size:12px;line-height:22px;padding-left:6px">异常设置</div>
<div class="a" style="left:799px;top:795px;width:58px;height:20px;background:#3f5289;color:#e9edf8;font-size:12px;line-height:22px;padding-left:6px">命令窗口</div>
<div class="a" style="left:859px;top:795px;width:58px;height:20px;background:#3f5289;color:#e9edf8;font-size:12px;line-height:22px;padding-left:6px">即时窗口</div>
<div class="a" style="left:920px;top:795px;width:34px;height:21px;background:#f5f7fc;color:#1e1e1e;font-size:12px;line-height:22px;padding-left:6px">输出</div>
<div class="a" style="left:956px;top:795px;width:57px;height:20px;background:#3f5289;color:#e9edf8;font-size:12px;line-height:22px;padding-left:6px">错误列表</div>
<!-- STATUS BAR -->
<div class="a" style="left:35px;top:823px;width:1242px;height:25px;background:#a34b41"></div>
<svg style="left:39px;top:830px" width="16" height="11" viewBox="0 0 16 11"><path d="M3.5 0.7h11.5L12.5 10.3H1z" fill="none" stroke="#fff" stroke-width="1.3"/></svg>
<span class="a" style="left:62px;top:828px;font-size:12px;color:#fff;line-height:16px">就绪</span>
<svg style="left:1071px;top:829px" width="9" height="12" viewBox="0 0 9 12"><path d="M4.5 12V4" stroke="#f4eeee" stroke-width="2"/><path d="M0.3 5.8L4.5 1 8.7 5.8z" fill="#f4eeee"/></svg>
<span class="a" style="left:1090px;top:828px;font-size:12px;color:#fff;line-height:16px">添加到源代码管理</span>
<svg style="left:1191px;top:832px" width="8" height="5" viewBox="0 0 8 5"><path d="M0 5L4 0.5 8 5z" fill="#fff"/></svg>
<svg style="left:1222px;top:826px" width="20" height="20" viewBox="0 0 20 20"><path d="M7 1.5C4 1.5 3 4 3 6.5V10L1 12.5h12L11 10V6.5C11 4 10 1.5 7 1.5z" fill="#cfc3c3"/><circle cx="13" cy="13" r="4.8" fill="#fff"/><path d="M12.2 10.8l1.3-0.9v6.3" stroke="#1e1e1e" stroke-width="1.2" fill="none"/></svg>
<svg style="left:1263px;top:834px" width="10" height="10" viewBox="0 0 10 10"><g fill="#d8a9a2"><rect x="7" y="1" width="1.2" height="1.2"/><rect x="5" y="3" width="1.2" height="1.2"/><rect x="7" y="3" width="1.2" height="1.2"/><rect x="3" y="5" width="1.2" height="1.2"/><rect x="5" y="5" width="1.2" height="1.2"/><rect x="7" y="5" width="1.2" height="1.2"/><rect x="1" y="7" width="1.2" height="1.2"/><rect x="3" y="7" width="1.2" height="1.2"/><rect x="5" y="7" width="1.2" height="1.2"/><rect x="7" y="7" width="1.2" height="1.2"/></g></svg>
<!-- CONSOLE -->
<div class="a" style="left:673px;top:232px;width:604px;height:571px;background:#0c0c0c;border-top:1px solid #5c5c5c;border-left:1px solid #5c5c5c;box-shadow:-3px 0 10px rgba(0,0,0,.18)"></div>
<div class="a" style="left:674px;top:233px;width:603px;height:30px;background:#fff"></div>
<svg style="left:682px;top:241px" width="16" height="12" viewBox="0 0 16 12"><rect x="0" y="0" width="16" height="12" fill="#5c3f95"/><rect x="0.5" y="0.5" width="15" height="11" fill="none" stroke="#3a2470" stroke-width="1"/><text x="8" y="9" font-family="Liberation Sans" font-size="7" font-weight="bold" fill="#fff" text-anchor="middle">C:\</text></svg>
<span class="a" style="left:703px;top:240px;font-size:13.13px;color:#000;line-height:16px">D:\002_Project\006_Visual_Studio\HelloWorld\HelloWorld\Debug\HelloWorld.exe</span>
<div class="a con" style="top:263px"><b class="cc" style="width:40px">调用</b> DerivedClass <b class="cc" style="width:20px">的</b> pureVirtualFunction <b class="cc" style="width:40px">函数</b></div>
<div class="a con" style="top:282px">Press any key to continue . . .</div>
<span class="a" style="left:1197px;top:857px;font-size:14px;color:#ababab;line-height:18px">CSDN @韩曙亮</span>
</body></html>
